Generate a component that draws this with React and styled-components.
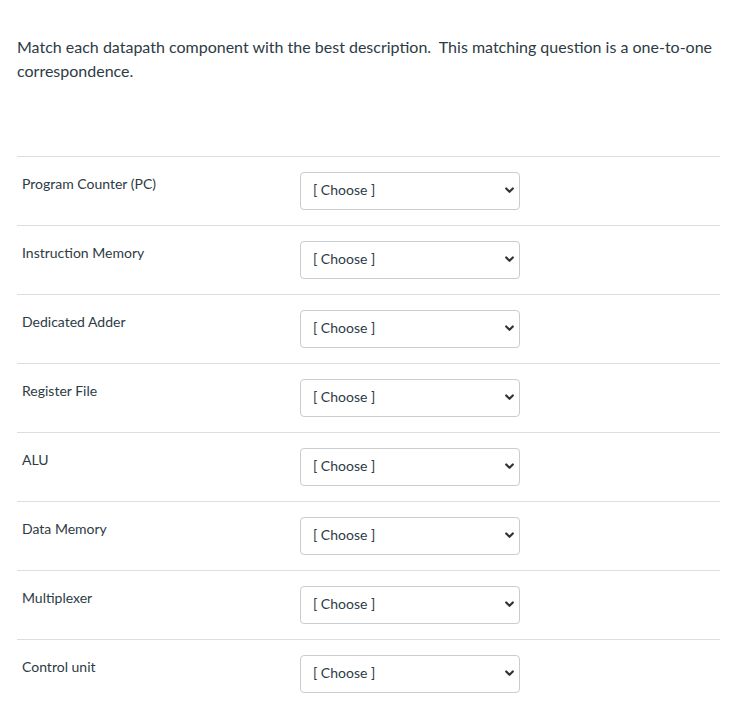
import React from "react";
import styled, { createGlobalStyle } from "styled-components";

const GlobalStyle = createGlobalStyle`
  body {
    margin: 0;
    background: #ffffff;
    font-family: Lato, "Liberation Sans", sans-serif;
    color: #2d3b45;
  }
`;

const Page = styled.div`
  padding: 35px 21px 0 17px;
`;

const Intro = styled.p`
  margin: 0 0 73px 0;
  font-size: 16px;
  line-height: 24px;
`;

const Table = styled.div`
  display: flex;
  flex-direction: column;
`;

const Row = styled.div`
  display: flex;
  align-items: flex-start;
  border-top: 1px solid #dddddd;
  padding: 15px 0;
`;

const Label = styled.div`
  width: 278px;
  padding: 2px 0 0 5px;
  font-size: 14px;
  line-height: 20px;
  color: #2d3b45;
`;

const SelectWrap = styled.div`
  position: relative;
  width: 220px;
  height: 38px;
`;

const Select = styled.select`
  appearance: none;
  -webkit-appearance: none;
  width: 100%;
  height: 100%;
  box-sizing: border-box;
  border: 1px solid #c7cdd1;
  border-radius: 4px;
  background: #ffffff;
  padding: 0 30px 3px 12px;
  font-family: Lato, "Liberation Sans", sans-serif;
  font-size: 14px;
  color: #2d3b45;
  outline: none;
`;

const Chevron = styled.svg`
  position: absolute;
  right: 6px;
  top: 15px;
  pointer-events: none;
`;

const items = [
  "Program Counter (PC)",
  "Instruction Memory",
  "Dedicated Adder",
  "Register File",
  "ALU",
  "Data Memory",
  "Multiplexer",
  "Control unit",
];

export default function App() {
  return (
    <Page>
      <GlobalStyle />
      <Intro>
        Match each datapath component with the best description.&nbsp; This
        matching question is a one-to-one correspondence.
      </Intro>
      <Table>
        {items.map((name) => (
          <Row key={name}>
            <Label>{name}</Label>
            <SelectWrap>
              <Select defaultValue="">
                <option value="">[ Choose ]</option>
              </Select>
              <Chevron width="9" height="7" viewBox="0 0 9 7">
                <path
                  d="M1.2 1.5 L4.5 4.8 L7.8 1.5"
                  fill="none"
                  stroke="#333333"
                  strokeWidth="2.2"
                  strokeLinecap="round"
                  strokeLinejoin="round"
                />
              </Chevron>
            </SelectWrap>
          </Row>
        ))}
      </Table>
    </Page>
  );
}
